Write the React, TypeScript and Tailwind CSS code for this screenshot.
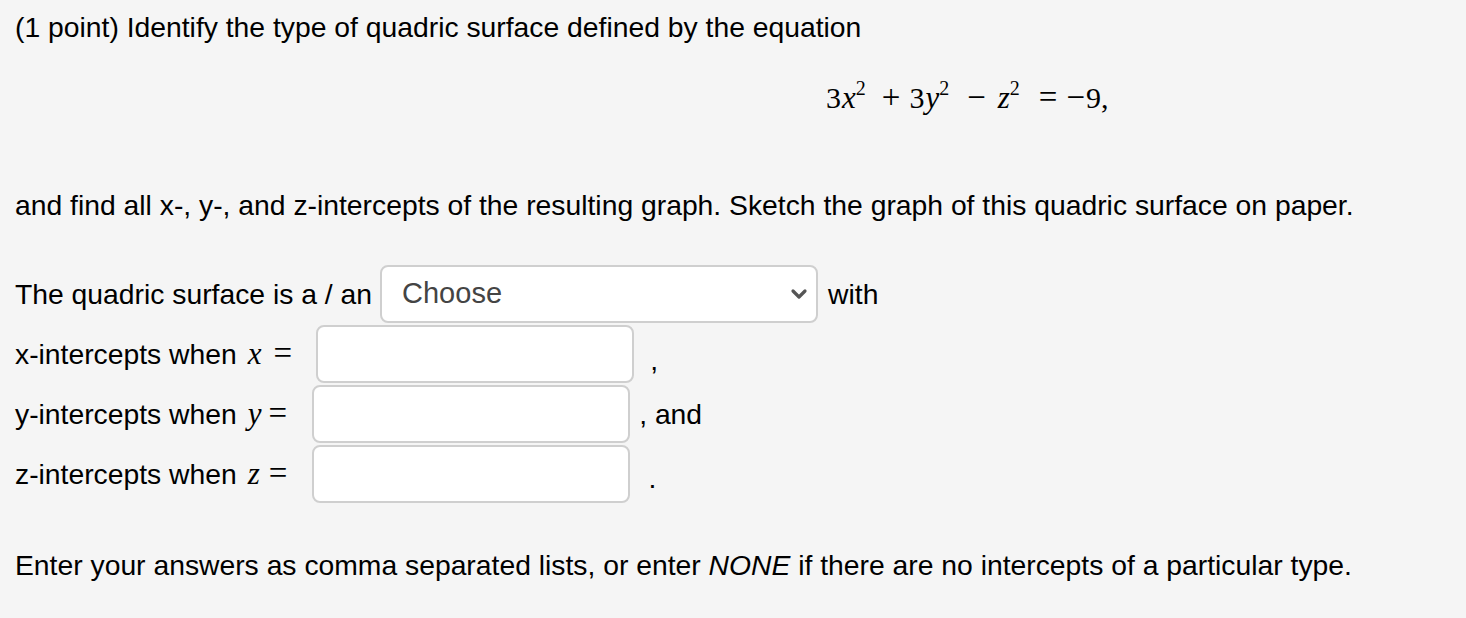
import React from 'react';

function MathVar({ children, className = '' }: { children: React.ReactNode; className?: string }) {
  return <span className={`font-['Liberation_Serif',serif] italic text-[31px] ${className}`}>{children}</span>;
}

function Sup({ children }: { children: React.ReactNode }) {
  return <span className="inline-block text-[20px] leading-none relative top-[-13px]">{children}</span>;
}

function AnswerBox({ className = '' }: { className?: string }) {
  return (
    <input
      type="text"
      className={`h-[58px] w-[318px] rounded-[8px] border-2 border-[#cfcfcf] bg-white outline-none ${className}`}
    />
  );
}

export default function App() {
  return (
    <div className="min-h-screen bg-[#f5f5f5] text-black px-[15px] pt-[10px] font-['Liberation_Sans',Arial,sans-serif] text-[28.3px]">
      <p className="leading-[34px]">(1 point) Identify the type of quadric surface defined by the equation</p>

      {/* displayed equation */}
      <div className="mt-[33px] h-[40px] leading-[40px] pl-[811px] font-['Liberation_Serif',serif] text-[30px] whitespace-nowrap">
        <span>3</span>
        <MathVar className="ml-[1px]">x</MathVar>
        <Sup>2</Sup>
        <span className="ml-[16px] mr-[9px] text-[33px]">+</span>
        <span>3</span>
        <MathVar className="ml-[1px]">y</MathVar>
        <Sup>2</Sup>
        <span className="ml-[18px] mr-[12px] text-[33px]">−</span>
        <MathVar>z</MathVar>
        <Sup>2</Sup>
        <span className="ml-[19px] mr-[9px] text-[33px]">=</span>
        <span className="text-[33px]">−</span>
        <span className="ml-[1px]">9,</span>
      </div>

      <p className="mt-[71px] leading-[34px]">
        and find all x-, y-, and z-intercepts of the resulting graph. Sketch the graph of this quadric surface on paper.
      </p>

      <div className="mt-[42px]">
        <div className="h-[60px] flex items-center">
          <span>The quadric surface is a / an</span>
          <div className="ml-[8px] h-[58px] w-[438px] rounded-[8px] border-2 border-[#cfcfcf] bg-white flex items-center justify-between pl-[20px] pr-[8px]">
            <span className="text-[#444] text-[29px]">Choose</span>
            <svg width="18" height="12" viewBox="0 0 18 12" fill="none">
              <path d="M3 3 L9 9 L15 3" stroke="#555" strokeWidth="3.2" strokeLinecap="round" strokeLinejoin="round" />
            </svg>
          </div>
          <span className="ml-[10px]">with</span>
        </div>

        <div className="h-[60px] flex items-center">
          <span>x-intercepts when</span>
          <MathVar className="ml-[11px]">x</MathVar>
          <span className="ml-[12px] font-['Liberation_Serif',serif] text-[33px]">=</span>
          <AnswerBox className="ml-[24px]" />
          <span className="ml-[16px] relative top-[6px]">,</span>
        </div>

        <div className="h-[60px] flex items-center">
          <span>y-intercepts when</span>
          <MathVar className="ml-[11px]">y</MathVar>
          <span className="ml-[7px] font-['Liberation_Serif',serif] text-[33px]">=</span>
          <AnswerBox className="ml-[25px]" />
          <span className="ml-[9px]">, and</span>
        </div>

        <div className="h-[60px] flex items-center">
          <span>z-intercepts when</span>
          <MathVar className="ml-[11px]">z</MathVar>
          <span className="ml-[9px] font-['Liberation_Serif',serif] text-[33px]">=</span>
          <AnswerBox className="ml-[25px]" />
          <span className="ml-[18px] relative top-[4px]">.</span>
        </div>
      </div>

      <p className="mt-[44px] leading-[34px]">
        Enter your answers as comma separated lists, or enter <i>NONE</i> if there are no intercepts of a particular type.
      </p>
    </div>
  );
}
